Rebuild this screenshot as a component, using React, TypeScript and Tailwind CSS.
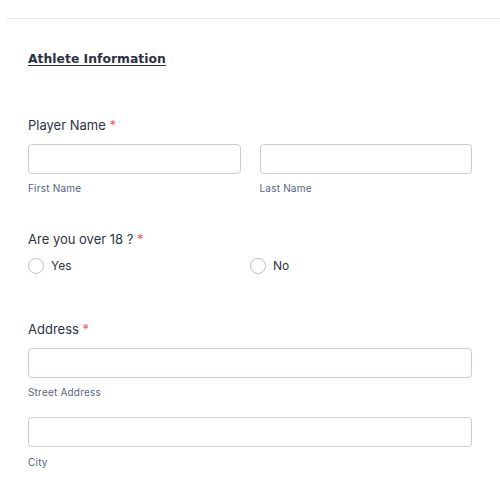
export default function App() {
  const font = { fontFamily: 'Inter, "Noto Sans", sans-serif' }

  return (
    <div className="min-h-[484px] bg-white text-[#2c3345]" style={font}>
      {/* top divider */}
      <div className="ml-[6px] pt-[18px]">
        <div className="h-px bg-[#e3e5ee]" />
      </div>

      <div className="px-[28px]">
        {/* Section heading */}
        <h2
          className="mt-[30px] text-[12.4px] font-bold leading-[20px] underline underline-offset-2"
          style={{ fontFamily: '"DejaVu Sans", Verdana, sans-serif' }}
        >
          Athlete Information
        </h2>

        {/* Player name */}
        <label className="mt-[46px] block text-[13px] leading-[20px]">
          Player Name <span className="text-[#f05a5a]">*</span>
        </label>
        <div className="mt-[9px] grid grid-cols-2 gap-x-[19px]">
          <div>
            <input className="block h-[30px] w-full rounded-[4px] border border-[#c8ccd8] bg-white outline-none" />
            <p className="mt-[7px] text-[10px] leading-[14px] tracking-[0.2px] text-[#57647e]">First Name</p>
          </div>
          <div>
            <input className="block h-[30px] w-full rounded-[4px] border border-[#c8ccd8] bg-white outline-none" />
            <p className="mt-[7px] text-[10px] leading-[14px] tracking-[0.2px] text-[#57647e]">Last Name</p>
          </div>
        </div>

        {/* Over 18 */}
        <label className="mt-[34px] block text-[13px] leading-[20px]">
          Are you over 18 ? <span className="text-[#f05a5a]">*</span>
        </label>
        <div className="mt-[9px] grid grid-cols-2">
          {['Yes', 'No'].map((opt) => (
            <label key={opt} className="flex h-[16px] items-center gap-[7px]">
              <span className="h-[16px] w-[16px] rounded-full border border-[#bcc1cc] bg-white" />
              <span className="text-[12px] leading-[16px]">{opt}</span>
            </label>
          ))}
        </div>

        {/* Address */}
        <label className="mt-[45px] block text-[13px] leading-[20px]">
          Address <span className="text-[#f05a5a]">*</span>
        </label>
        <input className="mt-[9px] block h-[30px] w-full rounded-[4px] border border-[#c8ccd8] bg-white outline-none" />
        <p className="mt-[7px] text-[10px] leading-[14px] tracking-[0.2px] text-[#57647e]">Street Address</p>
        <input className="mt-[18px] block h-[30px] w-full rounded-[4px] border border-[#c8ccd8] bg-white outline-none" />
        <p className="mt-[8px] text-[10px] leading-[14px] tracking-[0.2px] text-[#57647e]">City</p>
      </div>
    </div>
  )
}
